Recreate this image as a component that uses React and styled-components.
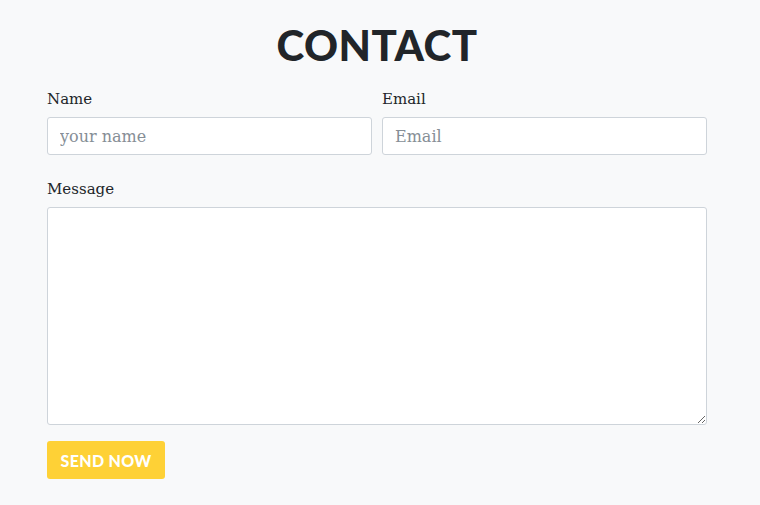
import React from 'react';
import styled, { createGlobalStyle } from 'styled-components';

const GlobalStyle = createGlobalStyle`
  html, body {
    margin: 0;
    padding: 0;
    background: #f8f9fa;
  }
  * { box-sizing: border-box; }
`;

const Page = styled.div`
  width: 760px;
  height: 505px;
  background: #f8f9fa;
  padding: 22px 53px 0 47px;
  font-family: "DejaVu Serif", "Liberation Serif", serif;
  color: #212529;
`;

const Title = styled.h2`
  margin: 0 0 21px;
  text-align: center;
  font-family: "Lato", "Open Sans", sans-serif;
  font-weight: 900;
  font-size: 42px;
  line-height: 46px;
  letter-spacing: 0.5px;
  color: #212529;
`;

const Row = styled.div`
  display: grid;
  grid-template-columns: 1fr 1fr;
  gap: 10px;
  margin-bottom: 24px;
`;

const Field = styled.div`
  display: flex;
  flex-direction: column;
`;

const Label = styled.label`
  font-size: 15px;
  line-height: 20px;
  margin-bottom: 8px;
`;

const Input = styled.input`
  height: 38px;
  padding: 0 12px;
  border: 1px solid #ced4da;
  border-radius: 3px;
  background: #fff;
  font-family: inherit;
  font-size: 16px;
  color: #495057;
  outline: none;
  &::placeholder { color: #868e96; }
`;

const TextArea = styled.textarea`
  height: 218px;
  padding: 8px 12px;
  border: 1px solid #ced4da;
  border-radius: 3px;
  background: #fff;
  font-family: inherit;
  font-size: 16px;
  outline: none;
  resize: vertical;
`;

const Button = styled.button`
  margin-top: 16px;
  width: 118px;
  height: 38px;
  border: none;
  border-radius: 3px;
  background: #fed136;
  color: #fff;
  font-family: "Lato", "Open Sans", sans-serif;
  font-weight: 900;
  font-size: 16px;
  letter-spacing: 0.3px;
  cursor: pointer;
`;

export default function App() {
  return (
    <>
      <GlobalStyle />
      <Page>
        <Title>CONTACT</Title>
        <Row>
          <Field>
            <Label>Name</Label>
            <Input placeholder="your name" />
          </Field>
          <Field>
            <Label>Email</Label>
            <Input placeholder="Email" />
          </Field>
        </Row>
        <Field>
          <Label>Message</Label>
          <TextArea />
        </Field>
        <Button>SEND NOW</Button>
      </Page>
    </>
  );
}
